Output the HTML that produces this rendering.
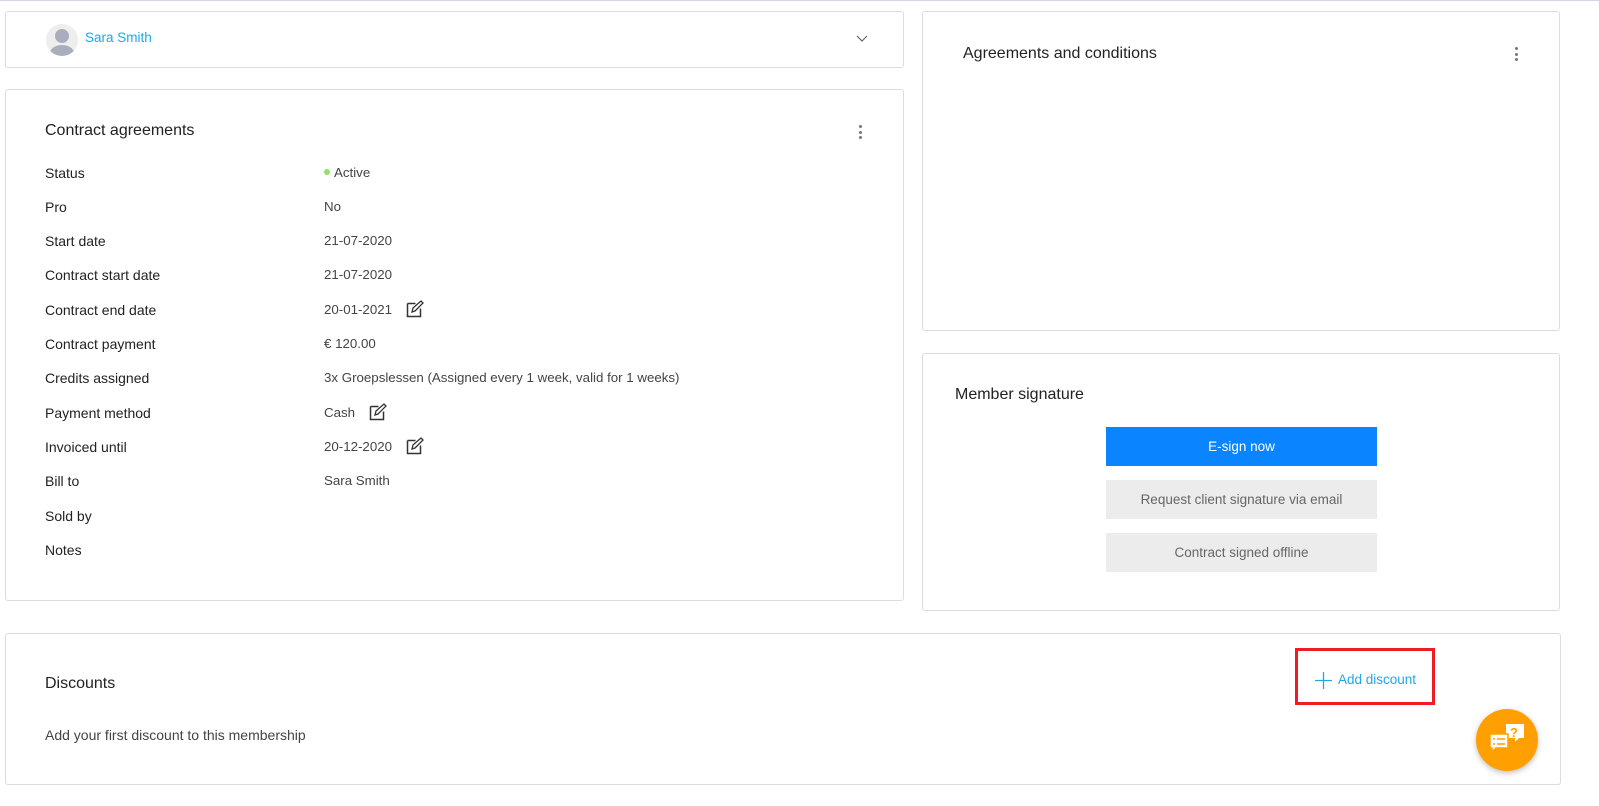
<!DOCTYPE html>
<html><head><style>
body{margin:0;width:1599px;height:806px;background:#fff;font-family:"Liberation Sans",sans-serif;position:relative;overflow:hidden;color:#222}
.c{position:absolute;border:1px solid #dcdcdc;border-radius:3px;background:#fff}
.t{position:absolute;font-size:16px;color:#222}
.l{position:absolute;left:45px;font-size:14px;color:#222}
.v{position:absolute;left:324px;font-size:13.3px;color:#444}
.btn{position:absolute;left:1106px;width:271px;height:39px;line-height:39px;text-align:center;font-size:13.5px}
.dots{position:absolute;width:4px}
.dots i{display:block;width:3px;height:3px;border-radius:50%;background:#777;margin-bottom:2.5px}
.ed{display:inline-block;vertical-align:-4px;margin-left:14px}
</style></head><body>
<div style="position:absolute;top:0;left:0;width:1599px;height:1px;background:#cfd8e3"></div>
<div class="c" style="left:5px;top:11px;width:897px;height:55px">
 <div style="position:absolute;left:40px;top:12px;width:32px;height:32px;border-radius:50%;background:#eee;overflow:hidden">
  <div style="position:absolute;left:9px;top:5px;width:14px;height:14px;border-radius:50%;background:#a9adbd"></div>
  <div style="position:absolute;left:4px;top:21px;width:24px;height:16px;border-radius:50%;background:#a9adbd"></div>
 </div>
 <div style="position:absolute;left:79px;top:18px;font-size:13.5px;color:#1ea8e8">Sara Smith</div>
 <svg style="position:absolute;left:850px;top:23px" width="12" height="8"><path d="M1 1l5 5 5-5" stroke="#666" fill="none" stroke-width="1.2"/></svg>
</div>
<div class="c" style="left:5px;top:89px;width:897px;height:510px"></div>
<div class="t" style="left:45px;top:122px">Contract agreements</div>
<div class="dots" style="left:859px;top:125px"><i></i><i></i><i></i></div>
<div class="l" style="top:165px">Status</div><div class="v" style="top:165px"><span style="display:inline-block;width:6px;height:6px;border-radius:50%;background:#8de36b;vertical-align:2px;margin-right:4px"></span>Active</div>
<div class="l" style="top:199px">Pro</div><div class="v" style="top:199px">No</div>
<div class="l" style="top:233px">Start date</div><div class="v" style="top:233px">21-07-2020</div>
<div class="l" style="top:267px">Contract start date</div><div class="v" style="top:267px">21-07-2020</div>
<div class="l" style="top:302px">Contract end date</div><div class="v" style="top:300px">20-01-2021<svg class="ed" width="18" height="18"><path d="M1.5 3.5h8M1.5 3.5v13h13v-8" stroke="#333" fill="none" stroke-width="1.5"/><path d="M6 12l1-4 8-7 2 2-8 8z" stroke="#333" fill="none" stroke-width="1.3"/></svg></div>
<div class="l" style="top:336px">Contract payment</div><div class="v" style="top:336px">€ 120.00</div>
<div class="l" style="top:370px">Credits assigned</div><div class="v" style="top:370px">3x Groepslessen (Assigned every 1 week, valid for 1 weeks)</div>
<div class="l" style="top:405px">Payment method</div><div class="v" style="top:403px">Cash<svg class="ed" width="18" height="18"><path d="M1.5 3.5h8M1.5 3.5v13h13v-8" stroke="#333" fill="none" stroke-width="1.5"/><path d="M6 12l1-4 8-7 2 2-8 8z" stroke="#333" fill="none" stroke-width="1.3"/></svg></div>
<div class="l" style="top:439px">Invoiced until</div><div class="v" style="top:437px">20-12-2020<svg class="ed" width="18" height="18"><path d="M1.5 3.5h8M1.5 3.5v13h13v-8" stroke="#333" fill="none" stroke-width="1.5"/><path d="M6 12l1-4 8-7 2 2-8 8z" stroke="#333" fill="none" stroke-width="1.3"/></svg></div>
<div class="l" style="top:473px">Bill to</div><div class="v" style="top:473px">Sara Smith</div>
<div class="l" style="top:508px">Sold by</div>
<div class="l" style="top:542px">Notes</div>

<div class="c" style="left:922px;top:11px;width:636px;height:318px"></div>
<div class="t" style="left:963px;top:45px">Agreements and conditions</div>
<div class="dots" style="left:1515px;top:47px"><i></i><i></i><i></i></div>
<div class="c" style="left:922px;top:353px;width:636px;height:256px"></div>
<div class="t" style="left:955px;top:386px">Member signature</div>
<div class="btn" style="top:427px;background:#0a84ff;color:#fff">E-sign now</div>
<div class="btn" style="top:480px;background:#ececec;color:#666">Request client signature via email</div>
<div class="btn" style="top:533px;background:#ececec;color:#666">Contract signed offline</div>

<div class="c" style="left:5px;top:633px;width:1554px;height:150px"></div>
<div class="t" style="left:45px;top:675px">Discounts</div>
<div class="l" style="top:727px;color:#444">Add your first discount to this membership</div>
<div style="position:absolute;left:1295px;top:648px;width:134px;height:51px;border:3px solid #ee1c25"></div>
<svg style="position:absolute;left:1315px;top:672px" width="17" height="17"><path d="M8.5 0v17M0 8.5h17" stroke="#1ea8e8" stroke-width="1.3"/></svg>
<div style="position:absolute;left:1338px;top:672px;font-size:13.5px;color:#1ea8e8">Add discount</div>
<div style="position:absolute;left:1476px;top:709px;width:62px;height:62px;border-radius:50%;background:#ff9f00;box-shadow:0 2px 6px rgba(0,0,0,.25)">
 <svg width="62" height="62"><path d="M30 15h18v14h-5l-4 4v-4h-9z" fill="#fff"/><text x="34" y="28" font-size="13" font-weight="bold" fill="#ff9f00" font-family="Liberation Sans">?</text><path d="M14 25h18v14h-12l-4 4v-4h-2z" fill="#fff" stroke="#ff9f00" stroke-width="1.5"/><path d="M17 30h2M21 30h8M17 35h2M21 35h8" stroke="#ff9f00" stroke-width="1.5"/></svg>
</div>
</body></html>
